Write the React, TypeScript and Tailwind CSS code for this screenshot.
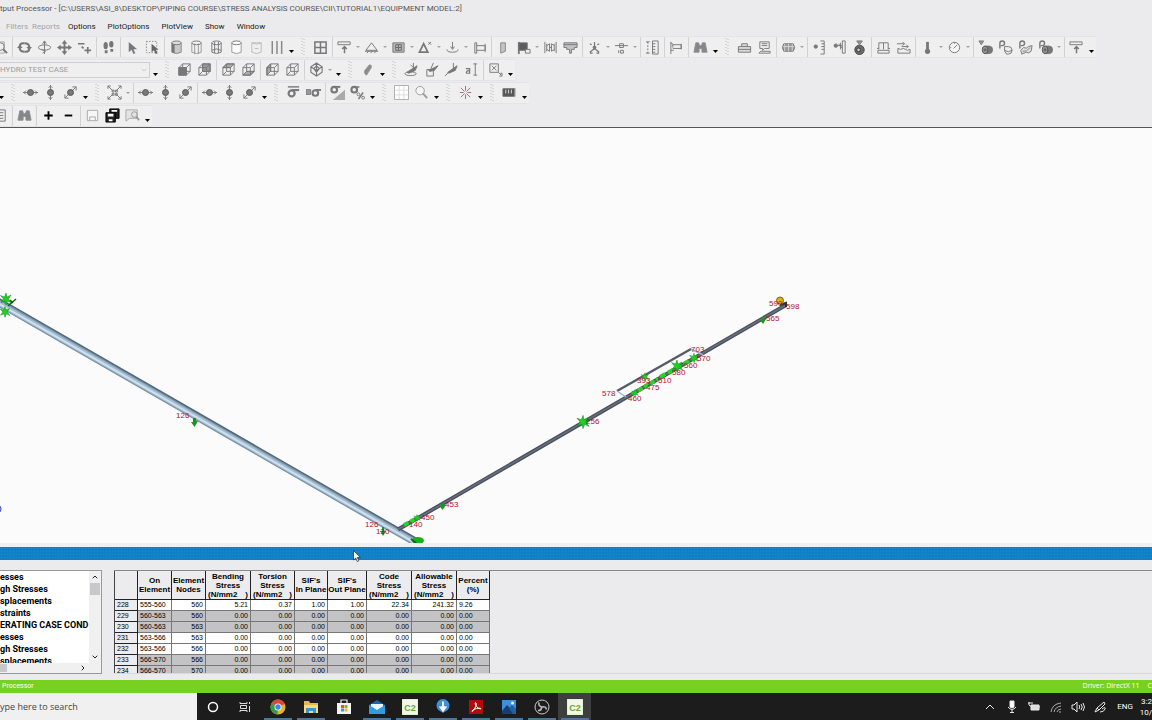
import type { ReactNode } from "react";
import { ChevronDown, ChevronRight, ChevronUp } from "lucide-react";

// toolbar glyphs, all drawn on a 16x16 grid
const cube = <path d="M2 6h8v8H2zM2 6l4-4h8v8l-4 4M10 6l4-4M6 2v8h8M6 10l-4 4" />;
const sigma = (
  <>
    <circle cx="6" cy="9" r="3.2" strokeWidth="2.4" />
    <path d="M6 5.4h8" strokeWidth="2.2" />
  </>
);
const ball = <circle cx="8" cy="8" r="3.2" fill="#77787a" stroke="#555" />;
const rho = <path d="M2 9V3.5a2.5 2.5 0 1 1 2.5 2.5H3" strokeWidth="1.5" />;
const pipeEnd = (
  <>
    <path d="M7 6.500h5q3.500 0 3.500 4t-3.500 4H7z" fill="#777" />
    <ellipse cx="7.500" cy="10.500" rx="3" ry="4" fill="#999" stroke="#555" />
    <circle cx="7.500" cy="10.500" r="1.300" fill="#555" />
  </>
);
const binoculars = (
  <path
    d="M3 3h3l1 3h2l1-3h3l2 10H9.500V9h-3v4H1z"
    fill="#85868a"
    stroke="#8f9093"
  />
);

const glyphs: Record<string, ReactNode> = {
  zoom: (
    <>
      <path d="M2 2h10v12H2z" stroke="#aaa" />
      <circle cx="8" cy="7" r="4" />
      <path d="m11 10 4 4" strokeWidth="2" />
    </>
  ),
  rotate: (
    <>
      <path d="M3 9V7q0-3.500 3.500-3.500H8M13 7v2q0 3.500-3.500 3.500H8" strokeWidth="2.200" />
      <path d="M8 3.500q5 0 5 4M8 12.500q-5 0-5-4" strokeWidth="2.200" />
      <path d="M0 8.500h6L3 5zM10 7.500h6L13 11z" fill="#77787a" stroke="none" />
    </>
  ),
  orbit: (
    <>
      <ellipse cx="8" cy="8" rx="6.500" ry="2.800" />
      <path d="M8 15V1M6 4l2-3 2 3M5 10l4 2-3 2" />
    </>
  ),
  pan: (
    <>
      <path d="M8 3v10M3 8h10" strokeWidth="2" />
      <path d="m8 0 3 4H5zM8 16l3-4H5zM0 8l4-3v6zM16 8l-4-3v6z" fill="#77787a" stroke="none" />
    </>
  ),
  zoomStep: <path d="M1 4h7M8 11h7M11.500 7.500v7M5 7l2 2" strokeWidth="1.800" />,
  walk: (
    <>
      <ellipse cx="5" cy="6" rx="2.300" ry="3.800" fill="#777" stroke="none" />
      <ellipse cx="11" cy="4.500" rx="2.300" ry="3.500" fill="#777" stroke="none" />
      <path d="M4 11h3v3H4zM10 9.500h3v3h-3z" fill="#777" stroke="none" />
    </>
  ),
  cursor: <path d="M4 2v11l3-2.500 2 4.500 2-1-2-4.200h4z" fill="#77787b" stroke="none" />,
  selectBox: (
    <>
      <path d="M1.500 1.500h11v12h-11z" strokeDasharray="1.500 1.500" stroke="#888" />
      <path d="M7 4v9l2.500-2 2 4 2-1-2-3.500h3z" fill="#666" stroke="none" />
    </>
  ),
  cylinder: (
    <>
      <path d="M3 3v10q5 3 10 0V3z" fill="#c9c9cb" stroke="#888" />
      <path d="M3 3v10l3 1V4z" fill="#777" stroke="none" />
      <ellipse cx="8" cy="3" rx="5" ry="2" fill="#ddd" />
    </>
  ),
  cylinderDouble: (
    <>
      <path d="M3 3v10q5 3 10 0V3M6 4v11M10 4v11" stroke="#999" />
      <ellipse cx="8" cy="3" rx="5" ry="2" />
    </>
  ),
  cylinderWire: (
    <>
      <path d="M3 3v10q5 3 10 0V3M6 2v12M10 2v12M3 11q5-3 10 0" />
      <ellipse cx="8" cy="3" rx="5" ry="2" />
    </>
  ),
  cylinderEmpty: (
    <>
      <path d="M3 3v10q5 3 10 0V3z" fill="#fafafa" stroke="#999" />
      <ellipse cx="8" cy="3" rx="5" ry="2" fill="#fff" />
    </>
  ),
  cylinderFaint: (
    <>
      <path d="M3 3v10q5 3 10 0V3z" stroke="#bbb" />
      <path d="M3 3q5 3 10 0M6 9h4" stroke="#bbb" />
    </>
  ),
  lines: <path d="M3.500 1v14M8.500 1v14M13.500 1v14" strokeWidth="1.600" stroke="#8a8a8c" />,
  panes: <path d="M2 2h12v12H2zM8 2v12M2 8h12" strokeWidth="1.600" />,
  restraint: (
    <>
      <path d="M1 2h13v3H1z" fill="#eee" />
      <path d="M8 14V7M5.500 9.500 8 7l2.500 2.500" strokeWidth="1.600" />
    </>
  ),
  anchor: <path d="m8 3 6 8H2zM1 12h14M3 14l2-2M7 14l2-2M11 14l2-2" />,
  hanger: (
    <>
      <path d="M2 3h12v10H2z" fill="#b7b7b9" />
      <path d="M5 5h6v6H5zM8 5v6M5 8h6" stroke="#666" />
    </>
  ),
  delta: (
    <>
      <path d="m6 4 4.500 9h-9z" strokeWidth="1.800" />
      <path d="m11 2 3 3M14 2l-3 3" />
    </>
  ),
  nozzle: <path d="M8 2v7M6 7l2 3 2-3M2 10q0 3 6 3t6-3" />,
  flange: <path d="M3 3v11M5 3v11M5 6h9v5H5M14 4v9M3 3h2M3 14h2" />,
  plate: <path d="M5 3v11l5-2V3z" fill="#c4c4c6" stroke="#888" />,
  flag: (
    <>
      <path d="M3 2v13" strokeWidth="2" />
      <path d="M3 3h9v8H3z" fill="#5b5c5e" />
      <path d="M10 10h5v4h-5z" fill="#eee" />
    </>
  ),
  expansion: <path d="M2 2v12M14 2v12M4 4v8M12 4v8M4 6l3-2v8l-3-2M12 6 9 4v8l3-2M7 8h2" />,
  tee: <path d="M1 3h14v5h-3v2H9v4H7v-4H4V8H1zM1 5h14" fill="#c3c3c5" />,
  axes: (
    <>
      <path d="M8 9V2M8 9l-5 4M8 9l5 4M5 5l-2-1M11 5l2-1M3 14h3M10 14h3" strokeWidth="1.300" />
      <circle cx="8" cy="8" r="1.500" fill="#777" />
    </>
  ),
  node: (
    <>
      <path d="M1 6h14M6 4h4v4H6z" />
      <path d="M5 11v3M7 11h3v3H7z" />
    </>
  ),
  ruler: (
    <>
      <path d="M3 2v12" strokeDasharray="2 1.500" />
      <path d="M1 2h4M1 14h4M8 1h6v14H8zM8 4h3M8 7h3M8 10h3M8 13h3" />
    </>
  ),
  spread: <path d="M2 2v13M4 8V5h9v4H4M13 4v6M2 3l3 2M2 11h3" />,
  binoculars,
  toolbox: <path d="M1.500 7h13v6h-13zM5 7V4h6v3M1.500 10h13" fill="#d9d9db" />,
  comment: <path d="M3 2h10v7H8l-2 2V9H3zM5 4h6M5 6h6M2 14l2-2h10v2z" />,
  vessel: (
    <>
      <path d="M3 4h10q3 4 0 8H3Q0 8 3 4z" fill="#9a9a9c" />
      <path d="M4 4v8M8 4v8M12 4v8M2 7h12" stroke="#d4d4d4" />
    </>
  ),
  nodeRuler: (
    <>
      <circle cx="4" cy="7" r="1.800" fill="#777" />
      <path d="M9 1h4v14H9M10 4h3M10 7h3M10 10h3" />
    </>
  ),
  nodeFlange: (
    <>
      <circle cx="4" cy="6" r="1.800" fill="#777" />
      <path d="M5 6h6M11 1h3v13h-3zM7 4l4 5M9 3v7" />
    </>
  ),
  weight: (
    <>
      <circle cx="8" cy="10.500" r="5" fill="#6b6b6d" stroke="#444" />
      <circle cx="7" cy="10.500" r="2" fill="#ccc" stroke="#333" />
      <path d="M5 1h6L8 5z" fill="#999" />
    </>
  ),
  uniform: <path d="M3 3v7M8 3v7M13 3v7M3 3h10M2 11h12v3H2zM1 9h2M13 9h2" />,
  wind: <path d="M1 4h8M7 2l2 2-2 2M6 7h7M11 5l2 2-2 2M2 9v5h13v-4q-3 2-5 0t-5 0z" />,
  temperature: (
    <>
      <path d="M8 2v9" strokeWidth="3" />
      <circle cx="8" cy="12" r="2.800" fill="#777" stroke="none" />
    </>
  ),
  gauge: (
    <>
      <circle cx="8" cy="8" r="5.500" fill="#f5f5f5" />
      <path d="m7 9 4-4M8 3v1M3.500 8h1" />
    </>
  ),
  pipeWeight: (
    <>
      {pipeEnd}
      <path d="M1 1h5L3.500 5z" fill="#999" />
    </>
  ),
  rhoFluid: (
    <>
      {rho}
      <path d="M7 7h4q4 0 4 4t-4 4H9q-3-3-2-8z" fill="#eee" />
      <path d="M7 11q4 3 8 0" />
    </>
  ),
  rhoInsulation: (
    <>
      {rho}
      <path d="m3 11 3-3q3 2 5-1l4-1-1 6q-3 3-5 1l-5 2zM5 12q4 1 8-4" fill="#e2e2e4" />
    </>
  ),
  rhoPipe: (
    <>
      {pipeEnd}
      {rho}
    </>
  ),
  cubeSolid: (
    <>
      <path d="M2 6h8v8H2z" fill="#77787a" />
      {cube}
    </>
  ),
  cubeBack: (
    <>
      <path d="M6 2h8v8H6z" fill="#98999b" />
      {cube}
    </>
  ),
  cubeTop: (
    <>
      <path d="m2 6 4-4h8l-4 4z" fill="#aaa" />
      {cube}
    </>
  ),
  cubeBottom: (
    <>
      <path d="m2 14 4-4h8l-4 4z" fill="#aaa" />
      {cube}
    </>
  ),
  cubeLeft: (
    <>
      <path d="m2 6 4-4v8l-4 4z" fill="#aaa" />
      {cube}
    </>
  ),
  cubeRight: cube,
  iso: <path d="m8 1 6 4v6l-6 4-6-4V5zM8 1v14M2 5l6 4 6-4M5 7l3-3 3 3-3 4z" strokeWidth="1.200" />,
  eraser: <path d="m5 9 5-6q3 0 2 3l-5 8q-3-1-2-5z" fill="#8b8c8e" stroke="#999" />,
  penOval: (
    <>
      <path d="m3 11 11-7-2 5-7 3z" fill="#77787a" />
      <ellipse cx="7" cy="12.500" rx="6" ry="2" />
      <path d="M10 1v6M7 3l3 3" />
    </>
  ),
  penBox: (
    <>
      <path d="m5 9 10-5-4 5-5 1z" fill="#77787a" />
      <path d="M3 8h7v7H3zM10 1 7 8" />
    </>
  ),
  penLine: (
    <>
      <path d="m4 11 10-7-2 5-7 3z" fill="#77787a" />
      <path d="m1 15 6-6M10 1v6" />
    </>
  ),
  textTool: (
    <>
      <path d="M12 2v12M10 2h4M10 14h4" />
      <path d="M2 7h4v5H3q-2-2 3-3" strokeWidth="1.300" />
    </>
  ),
  pick: <path d="M2 2h9v9H2zM4 4l5 5M9 4 4 9M11 11l3 3M13 12h2v3h-3" />,
  ballX: (
    <>
      <path d="M0 8h16M3 6 1 8l2 2M13 6l2 2-2 2" />
      {ball}
    </>
  ),
  ballY: (
    <>
      <path d="M8 0v16M6 3l2-2 2 2M6 13l2 2 2-2" />
      {ball}
    </>
  ),
  ballZ: (
    <>
      <path d="M2 14 14 2M10 2h4v4M2 10v4h4" />
      {ball}
    </>
  ),
  explode: (
    <>
      <path d="m1 1 5 5M15 1l-5 5M1 15l5-5M15 15l-5-5M1 4V1h3M12 1h3v3M1 12v3h3M12 15h3v-3" />
      <path d="M5.500 5.500h2v2h-2zM9 5.500h2v2H9zM5.500 9h2v2h-2zM9 9h2v2H9z" />
    </>
  ),
  sigmaBar: (
    <>
      {sigma}
      <path d="M2 2h12" strokeWidth="1.500" />
    </>
  ),
  sigmaBlock: (
    <>
      <path d="M0 5h5v5H0z" fill="#999" />
      <circle cx="10" cy="8.500" r="3" strokeWidth="2.200" />
      <path d="M10 5.300h6" strokeWidth="2" />
    </>
  ),
  sigmaRamp: (
    <>
      <path d="M16 5v11H3z" fill="#aaa" stroke="none" />
      <circle cx="4.500" cy="5" r="3" strokeWidth="2.200" />
      <path d="M5 2h6" strokeWidth="2" />
    </>
  ),
  sigmaPercent: (
    <>
      <circle cx="4.500" cy="5" r="3" strokeWidth="2.200" />
      <path d="M5 2h5M14 8l-5 7" strokeWidth="1.600" />
      <circle cx="9" cy="10" r="1.500" />
      <circle cx="14" cy="13.500" r="1.500" />
    </>
  ),
  table: (
    <>
      <path d="M.5.5h15v15H.5z" fill="#fff" stroke="#aaa" />
      <path d="M5.500 1v14M10.500 1v14M1 5.500h14M1 10.500h14" stroke="#ddd" />
    </>
  ),
  lens: (
    <>
      <circle cx="6.500" cy="6" r="4.500" fill="#f4f4f4" stroke="#999" />
      <path d="m9.500 9 4.500 5" stroke="#999" strokeWidth="2" />
    </>
  ),
  spark: <path d="M8 1v5M8 10v5M2 8h4M10 8h4M3 3l4 4M13 3 9 7M3 13l4-4M13 13 9 9" stroke="#9c6c7a" />,
  film: (
    <>
      <path d="M1 4h13v8H1z" fill="#555" stroke="#666" />
      <path d="M4 5v4M7 5v4M10 5v4M14 4v10" stroke="#ddd" />
    </>
  ),
  sheet: <path d="M2 2h11v12H2zM4 5h7M4 8h7M4 11h7" />,
  plus: <path d="M8 3.500v9M3.500 8h9" stroke="#000" strokeWidth="2" />,
  minus: <path d="M4 8h8" stroke="#000" strokeWidth="2" />,
  save: <path d="M2.500 2.500h11v11h-11zM5 13.500v-4h6v4" stroke="#aaa" fill="#f6f6f6" />,
  saveAll: (
    <>
      <path d="M5 1h10v10H5z" fill="#222" stroke="#000" />
      <path d="M1 5h10v10H1z" fill="#222" stroke="#000" />
      <path d="M3 6h6v3H3zM4 12h4v2H4zM7 2h6v2H7z" fill="#fff" stroke="none" />
    </>
  ),
  report: (
    <>
      <path d="M1 2h12v9H5l-4 3z" fill="#e3e3e5" stroke="#aaa" />
      <circle cx="10" cy="7" r="3" stroke="#999" />
      <path d="m12 9 3 4" stroke="#999" strokeWidth="2" />
    </>
  ),
};

function Tool({ name }: { name: string }) {
  return (
    <button aria-label={name} className="flex w-5 shrink-0 items-center justify-center">
      <svg
        viewBox="0 0 16 16"
        className="h-[15px] w-[15px] text-[#77787a]"
        fill="none"
        stroke="currentColor"
      >
        {glyphs[name]}
      </svg>
    </button>
  );
}

// items: glyph names, "|" is a separator and "v" a small drop-down arrow
function Toolbar({ items, grip = true, children }: { items: string; grip?: boolean; children?: ReactNode }) {
  return (
    <div className="flex h-[22px] shrink-0 items-stretch border-y border-[#e4e4e6] bg-[#efeff0]">
      {grip && (
        <span className="flex w-[14px] items-center justify-center">
          <svg width="4" height="18">
            <path d="M1 0v18M3 1v17" stroke="#bdbdbf" strokeDasharray="1 2" />
          </svg>
        </span>
      )}
      {children}
      {items.split(" ").filter(Boolean).map((item, i) => {
        if (item === "|") {
          return (
            <span key={i} className="flex w-1 shrink-0 justify-center">
              <span className="w-px bg-[#d2d2d4]" />
            </span>
          );
        }
        if (item === "v") {
          return (
            <button key={i} aria-label="More" className="flex w-[7px] shrink-0 items-center justify-center">
              <svg width="4" height="2">
                <path d="M0 0h4L2 2z" fill="#a2a2a4" />
              </svg>
            </button>
          );
        }
        return <Tool key={i} name={item} />;
      })}
      <button aria-label="Toolbar options" className="flex w-[10px] shrink-0 items-end justify-center pb-1">
        <svg width="5" height="3">
          <path d="M0 0h5L2.500 3z" fill="#000" />
        </svg>
      </button>
    </div>
  );
}

const menus = ["Options", "PlotOptions", "PlotView", "Show", "Window"];

const labels: [string, number, number][] = [
  ["126", 176, 418],
  ["126", 365, 527],
  ["130", 376, 534],
  ["140", 409, 527],
  ["450", 421, 520],
  ["453", 445, 507],
  ["256", 586, 424],
  ["578", 602, 396],
  ["460", 628, 401],
  ["475", 646, 390],
  ["393", 637, 383],
  ["510", 658, 383],
  ["580", 672, 375],
  ["560", 684, 368],
  ["570", 697, 361],
  ["703", 691, 352],
  ["565", 766, 321],
  ["590", 769, 306],
  ["598", 786, 309],
];

function Star({ x, y, r = 1 }: { x: number; y: number; r?: number }) {
  return (
    <path
      transform={`translate(${x} ${y}) scale(${r})`}
      d="m0-6 1 4L5-4 2.500 0l3 4-4-2L0 6l-1-4-4 1.500L-2.500 0l-3-3.500 4 1.500z"
      fill="#1fd01f"
      stroke="#0f8a1a"
      strokeWidth="0.500"
    />
  );
}

function Model() {
  return (
    <svg className="block h-full w-full" role="img" aria-label="Piping model">
      <g transform="translate(0 -128)" fill="none">
        <path d="m-4 300.500 421 242" stroke="#526577" strokeWidth="8" />
        <path d="m-4 301.500 421 242" stroke="#7b95aa" strokeWidth="7" />
        <path d="m-4 301.500 421 242" stroke="#a3bccf" strokeWidth="4.500" />
        <path d="m-4 302 421 242" stroke="#cfe1ee" strokeWidth="2" />
        <ellipse cx="418" cy="540.500" rx="6" ry="3.500" fill="#12b416" />
        <path d="M411 539l5 4" stroke="#0b6e12" strokeWidth="2" />

        <path d="M398 529.500 786 305" stroke="#484f5c" strokeWidth="4" />
        <path d="M398 529.500 786 305" stroke="#687080" strokeWidth="1.500" />
        <path d="m617 391 74-42" stroke="#555c69" strokeWidth="2.500" />
        <path d="m617 391 9 6M691 349l12 6" stroke="#9fb3c4" strokeWidth="1.500" />
        <path d="m632 394 26-15M404 525l15-8" stroke="#26d626" strokeWidth="4" strokeDasharray="5 2" />
        <path d="m660 377 38-21" stroke="#26d626" strokeWidth="4" strokeDasharray="6 3" />
        <path d="m780 305 6-2v4" stroke="#2b3038" strokeWidth="2" />
        <circle cx="780" cy="300.500" r="3.500" fill="#d9b310" stroke="#7a6810" />

        <Star x={6} y={299} />
        <Star x={5} y={312} r={0.9} />
        <path d="m8 306 8-7M10 300l3 3" stroke="#0c6414" strokeWidth="1.500" />
        <Star x={583} y={422} r={1.1} />
        <Star x={677} y={366} />
        <Star x={645} y={377} r={0.7} />
        <Star x={694} y={358} r={0.8} />
        <Star x={635} y={393} r={0.6} />
        <Star x={417} y={518} r={0.6} />
        <g fill="#15981c">
          <path d="M193 418h3v3h2l-3.500 6-3.500-5h2zM441 503h3v2h2l-3.500 5-3-4h1.500zM382 527h2v4h2l-3 5-3-5h2zM762 317h2v2h2l-3 5-3-4h2z" />
        </g>
        {labels.map(([text, x, y], i) => (
          <text key={i} x={x} y={y} fill="#b8102c" className="font-['Liberation_Sans',sans-serif] text-[8px]">
            {text}
          </text>
        ))}
        <path d="M-1 505q4 4 0 8" stroke="#2036c8" />
      </g>
    </svg>
  );
}

const reports = [
  "esses",
  "gh Stresses",
  "splacements",
  "straints",
  "ERATING CASE COND",
  "esses",
  "gh Stresses",
  "splacements",
];

const columns: { lines: string[]; unit?: boolean }[] = [
  { lines: ["On", "Element"] },
  { lines: ["Element", "Nodes"] },
  { lines: ["Bending", "Stress"], unit: true },
  { lines: ["Torsion", "Stress"], unit: true },
  { lines: ["SIF's", "In Plane"] },
  { lines: ["SIF's", "Out Plane"] },
  { lines: ["Code", "Stress"], unit: true },
  { lines: ["Allowable", "Stress"], unit: true },
  { lines: ["Percent", "(%)"] },
];

const zeros = ["0.00", "0.00", "0.00", "0.00", "0.00", "0.00", "0.00"];
const rows = [
  { id: 228, shaded: false, cells: ["555-560", "560", "5.21", "0.37", "1.00", "1.00", "22.34", "241.32", "9.26"] },
  { id: 229, shaded: true, cells: ["560-563", "560", ...zeros] },
  { id: 230, shaded: true, cells: ["560-563", "563", ...zeros] },
  { id: 231, shaded: false, cells: ["563-566", "563", ...zeros] },
  { id: 232, shaded: false, cells: ["563-566", "566", ...zeros] },
  { id: 233, shaded: true, cells: ["566-570", "566", ...zeros] },
  { id: 234, shaded: true, cells: ["566-570", "570", ...zeros] },
];

function StressTable() {
  return (
    <table className="w-[376px] table-fixed border-separate border-spacing-0 border-l border-t border-[#444] font-['Liberation_Sans',sans-serif] text-black">
      <colgroup>
        <col className="w-[23px]" />
        <col className="w-[34px]" />
        <col className="w-[34px]" />
        <col className="w-[45px]" />
        <col className="w-[44px]" />
        <col className="w-[33px]" />
        <col className="w-[39px]" />
        <col className="w-[45px]" />
        <col className="w-[45px]" />
        <col className="w-[33px]" />
      </colgroup>
      <thead>
        <tr className="h-[29px] bg-[#ececee] text-[8px] leading-[9px]">
          <th className="border-b border-r border-[#222] p-0" />
          {columns.map((col, i) => (
            <th key={i} className="whitespace-nowrap border-b border-r border-[#222] p-0 font-bold">
              {col.lines.map((line) => (
                <div key={line}>{line}</div>
              ))}
              {col.unit && (
                <div className="flex justify-between px-0.5">
                  <span>(N/mm2</span>
                  <span>)</span>
                </div>
              )}
            </th>
          ))}
        </tr>
      </thead>
      <tbody>
        {rows.map((row) => (
          <tr key={row.id} className={`text-[7px] leading-[10px] ${row.shaded ? "bg-[#c3c3c5]" : "bg-white"}`}>
            <th className="border-b border-r border-[#222] bg-[#ececee] px-0.5 py-0 text-left font-normal">
              {row.id}
            </th>
            {row.cells.map((cell, i) => (
              <td
                key={i}
                className={`border-b border-r border-[#777] px-0.5 py-0 ${
                  i === 0 || i === 8 ? "text-left" : "text-right"
                }`}
              >
                {cell}
              </td>
            ))}
          </tr>
        ))}
      </tbody>
    </table>
  );
}

const c2 = (
  <>
    <path d="M0 0h16v16H0z" fill="#f2f7ea" />
    <path d="M0 0h16v16H0z" fill="none" stroke="#d5e8bd" />
    <text x="8" y="11.500" textAnchor="middle" fill="#6aa52c" className="font-['Liberation_Sans',sans-serif] text-[9px] font-bold">
      C2
    </text>
  </>
);

const apps: { name: string; open?: boolean; active?: boolean; art: ReactNode }[] = [
  {
    name: "Chrome",
    open: true,
    art: (
      <>
        <circle cx="8" cy="8" r="7.500" fill="#e2b72c" />
        <path d="M8 8 1.500 4.200A7.500 7.500 0 0 1 14.800 5z" fill="#d9463a" />
        <path d="M8 8 1.500 4.200A7.500 7.500 0 0 0 7.500 15.500z" fill="#37994c" />
        <circle cx="8" cy="8" r="3.500" fill="#fff" />
        <circle cx="8" cy="8" r="2.700" fill="#4285e8" />
      </>
    ),
  },
  {
    name: "File Explorer",
    open: true,
    art: (
      <>
        <path d="M1 2h5l1 2h8v10H1z" fill="#e6b84c" />
        <path d="M1 6h14v8H1z" fill="#f6d984" />
        <path d="M3 14V9h10v5h-3v-2H6v2z" fill="#3f93cf" />
      </>
    ),
  },
  {
    name: "Microsoft Store",
    art: (
      <>
        <path d="M5 4V1h6v3" fill="none" stroke="#eee" strokeWidth="1.200" />
        <path d="M1 4h14v11H1z" fill="#f4f4f4" />
        <path d="M5 6h3v3H5z" fill="#e8502c" />
        <path d="M8.500 6h3v3h-3z" fill="#7cb82c" />
        <path d="M5 9.500h3v3H5z" fill="#2c9de0" />
        <path d="M8.500 9.500h3v3h-3z" fill="#f0b62c" />
      </>
    ),
  },
  {
    name: "Mail",
    open: true,
    art: (
      <>
        <path d="m0 6 8-5 8 5v9H0z" fill="#1769b0" />
        <path d="M2 5h12v6H2z" fill="#eaf4fb" />
        <path d="m0 6 8 5 8-5v9H0z" fill="#2f9be0" />
      </>
    ),
  },
  { name: "CAESAR II", open: true, art: c2 },
  {
    name: "Downloader",
    open: true,
    art: (
      <>
        <circle cx="8" cy="6.500" r="6.500" fill="#3d93dd" />
        <path d="M6.500 2h3v5H13l-5 7-5-7h3.500z" fill="#eef6fd" stroke="#2265ad" strokeWidth="0.600" />
      </>
    ),
  },
  {
    name: "Acrobat Reader",
    open: true,
    art: (
      <>
        <path d="M1 1h14v14H1z" fill="#b30b0b" />
        <path
          d="M7.500 3.500q1.500 0 .5 3.500-1.500 4-4 5.500 0-2 4.500-3t4.500.5q-3 .5-5.500-4-.8-2.500 0-2.500z"
          fill="none"
          stroke="#fff"
        />
      </>
    ),
  },
  {
    name: "Photos",
    open: true,
    art: (
      <>
        <path d="M1 1h14v14H1z" fill="#3e8fdd" />
        <path d="m1 12 5-6 9 9H1z" fill="#153f73" />
        <path d="m8 9 3-3 4 4v5h-3z" fill="#245fa0" />
        <circle cx="11.500" cy="4" r="1.500" fill="#e5f2fd" />
      </>
    ),
  },
  {
    name: "OBS Studio",
    open: true,
    art: (
      <>
        <circle cx="8" cy="8" r="7" fill="#1d1d1f" stroke="#ccc" />
        <path d="M8 8q-4-1-3-4.500M8 8q4-1 4.500 2.500M8 8q-1 4-4 3.500" fill="none" stroke="#bbb" strokeWidth="1.600" />
      </>
    ),
  },
  { name: "CAESAR II Output", open: true, active: true, art: c2 },
];

const tray: { name: string; art: ReactNode }[] = [
  { name: "Show hidden icons", art: <path d="m3 9 4-4 4 4" /> },
  {
    name: "Microphone",
    art: (
      <>
        <path d="M5 1h4v6q-2 2-4 0z" fill="#fff" />
        <path d="M3 7q4 5 8 0M7 10v3M5 12.500h4" />
      </>
    ),
  },
  {
    name: "Battery",
    art: (
      <>
        <path d="M4 5h8v5H4zM12 7h1" fill="#ddd" />
        <path d="M1 3h5M2 2v3q2 3 4 0" />
      </>
    ),
  },
  { name: "Network", art: <path d="M2 12Q3 4 12 3M5 12q1-5 7-6M8 12q1-3 4-3M10 12h2" stroke="#aaa" /> },
  { name: "Volume", art: <path d="M1 5h2l3-3v10L3 9H1zM8 5q1.500 2 0 4M10 4q2.500 3 0 6M12 3q3 4 0 8" /> },
  { name: "Pen", art: <path d="m2 12 2-4 7-6 1 2-6 6zM4 8l2 2M9 9q4-3 3 0t-5 3" /> },
];

export default function App() {
  return (
    <div className="flex h-screen flex-col overflow-hidden bg-[#ebebed] font-['Open_Sans',sans-serif] text-[#222]">
      <header className="shrink-0 overflow-hidden border-b border-[#555]">
        <h1 className="h-[17px] whitespace-nowrap font-[Roboto,sans-serif] text-[8px] leading-[17px] text-[#555]">
          {"tput Processor - [C:\\USERS\\ASI_8\\DESKTOP\\PIPING COURSE\\STRESS ANALYSIS COURSE\\CII\\TUTORIAL1\\EQUIPMENT MODEL:2]"}
        </h1>
        <nav className="flex h-[19px] items-center pl-1.5 font-[Roboto,sans-serif] text-[8px]">
          <button className="mr-1 text-[#a5a5a7]" disabled>
            Filters
          </button>
          <button className="mr-2 text-[#a5a5a7]" disabled>
            Reports
          </button>
          <div className="flex gap-3">
            {menus.map((menu) => (
              <button key={menu}>{menu}</button>
            ))}
          </div>
        </nav>
        <div className="flex h-[22px] items-center">
          <div className="-ml-[10px]">
            <Toolbar
              grip={false}
              items="zoom | rotate orbit pan zoomStep | walk | cursor selectBox | cylinder cylinderDouble cylinderWire cylinderEmpty cylinderFaint lines"
            />
          </div>
          <Toolbar items="panes | restraint v anchor v hanger v delta v nozzle v flange | plate flag v expansion tee | axes v node v | ruler | spread | binoculars" />
          <Toolbar items="toolbox comment | vessel v | nodeRuler nodeFlange weight | uniform wind | temperature v gauge v | pipeWeight rhoFluid rhoInsulation rhoPipe v | restraint" />
        </div>
        <div className="flex h-[23px] items-center">
          <Toolbar grip={false} items="">
            <div className="relative flex w-[150px] items-center">
              <select
                aria-label="Load case"
                disabled
                className="h-4 w-full appearance-none border border-l-0 border-[#cfcfd1] font-[Roboto,sans-serif] text-[8px] leading-[14px] text-[#9b9b9d] opacity-100"
              >
                <option>HYDRO TEST CASE</option>
              </select>
              <ChevronDown className="absolute right-0.5 h-2 w-2 text-[#b5b5b7]" />
            </div>
          </Toolbar>
          <Toolbar items="cubeSolid cubeBack | cubeTop cubeBottom | cubeLeft cubeRight | iso v" />
          <Toolbar items="eraser" />
          <Toolbar items="penOval penBox penLine textTool | pick" />
        </div>
        <div className="flex h-[23px] items-center">
          <div className="-ml-1">
            <Toolbar grip={false} items="" />
          </div>
          <Toolbar items="ballX ballY ballZ" />
          <Toolbar items="explode v | ballX ballY ballZ | ballX ballY ballZ" />
          <Toolbar items="sigmaBar sigmaBlock | sigmaRamp sigmaPercent" />
          <Toolbar items="table lens" />
          <Toolbar items="spark" />
          <Toolbar items="film" />
        </div>
        <div className="flex h-[23px] items-center">
          <div className="-ml-[10px]">
            <Toolbar grip={false} items="sheet | binoculars | plus minus | save saveAll report" />
          </div>
        </div>
      </header>

      <main className="min-h-0 flex-1 bg-[#fbfbfb]">
        <Model />
      </main>

      <div className="relative shrink-0 border-t-4 border-[#f0f0f1] bg-[#0f7fc6]">
        <div className="h-[13px] bg-[radial-gradient(#2389cd_30%,transparent_30%)] bg-[length:3px_3px]" />
        <svg viewBox="0 0 8 12" className="absolute left-[353px] top-0.5 h-[14px] w-2">
          <path d="M.5.500v9.500l2.200-2 1.500 3.500 1.600-.700-1.500-3.300h3z" fill="#fff" stroke="#222" strokeWidth="0.700" />
        </svg>
      </div>

      <section className="flex shrink-0 pb-1.5 pt-2.5">
        <div className="flex h-[104px] w-[102px] shrink-0 flex-col border border-l-0 border-[#999] bg-white">
          <div className="flex min-h-0 flex-1">
            <ul className="flex-1 overflow-hidden whitespace-nowrap font-[Roboto,sans-serif] text-[9px] font-bold leading-3 text-black">
              {reports.map((report, i) => (
                <li key={i}>{report}</li>
              ))}
            </ul>
            <div className="flex w-3 flex-col items-center bg-[#f0f0f0] py-0.5">
              <ChevronUp className="h-2 w-2" strokeWidth={3} />
              <span className="mt-0.5 h-3 w-[10px] bg-[#c8c8ca]" />
              <ChevronDown className="mt-auto h-2 w-2" strokeWidth={3} />
            </div>
          </div>
          <div className="flex h-[10px] items-center bg-[#f0f0f0]">
            <span className="h-2 w-[7px] bg-[#c8c8ca]" />
            <ChevronRight className="ml-auto mr-3.5 h-2 w-2" strokeWidth={3} />
          </div>
        </div>
        <div className="ml-3 h-[104px] flex-1 overflow-hidden border-y border-t-[#888] border-b-[#d8d8da]">
          <div className="-mt-px">
            <StressTable />
          </div>
        </div>
      </section>

      <footer className="shrink-0">
        <div className="flex h-[13px] items-center gap-2 overflow-hidden bg-[#78d021] pl-0.5 text-[7px] text-white">
          <span className="flex-1 font-[Roboto,sans-serif]">Processor</span>
          <span>Driver: DirectX 11</span>
          <span>C</span>
        </div>
        <div className="flex h-[27px] bg-[#1c1c1d] text-white">
          <input
            type="text"
            aria-label="Search"
            placeholder="ype here to search"
            className="w-[197px] bg-[#f0f0f1] text-[9px] placeholder:text-[#444]"
          />
          <button aria-label="Cortana" className="flex w-8 items-center justify-center">
            <svg width="12" height="12" fill="none" stroke="#fff" strokeWidth="1.500">
              <circle cx="6" cy="6" r="4.500" />
            </svg>
          </button>
          <button aria-label="Task view" className="flex w-8 items-center justify-center">
            <svg width="12" height="12" fill="none" stroke="#ddd">
              <path d="M1.500 4.500h6v3h-6zM1 2.500V1M8 2.500V1M1 2.500h7M1 9.500h7M1 9.500V11M8 9.500V11M10.500 1v2M10.500 5v6" />
            </svg>
          </button>
          {apps.map((app) => (
            <button
              key={app.name}
              aria-label={app.name}
              className={`flex w-[33px] flex-col items-center pt-1.5 ${app.active ? "bg-[#3d3e40]" : ""}`}
            >
              <svg viewBox="0 0 16 16" className="h-4 w-4">
                {app.art}
              </svg>
              <span className={`mt-auto h-[2px] w-7 ${app.open ? "bg-[#4c7896]" : ""}`} />
            </button>
          ))}
          <div className="ml-auto flex items-center text-[8px]">
            {tray.map((item) => (
              <button key={item.name} aria-label={item.name} className="flex w-[22px] justify-center">
                <svg width="14" height="14" fill="none" stroke="#e8e8e8">
                  {item.art}
                </svg>
              </button>
            ))}
            <button className="w-7 font-[Roboto,sans-serif]">ENG</button>
            <div className="w-[13px] overflow-hidden text-right font-[Roboto,sans-serif] leading-[11px]">
              <div>3:2</div>
              <div>10/</div>
            </div>
          </div>
        </div>
      </footer>
    </div>
  );
}
